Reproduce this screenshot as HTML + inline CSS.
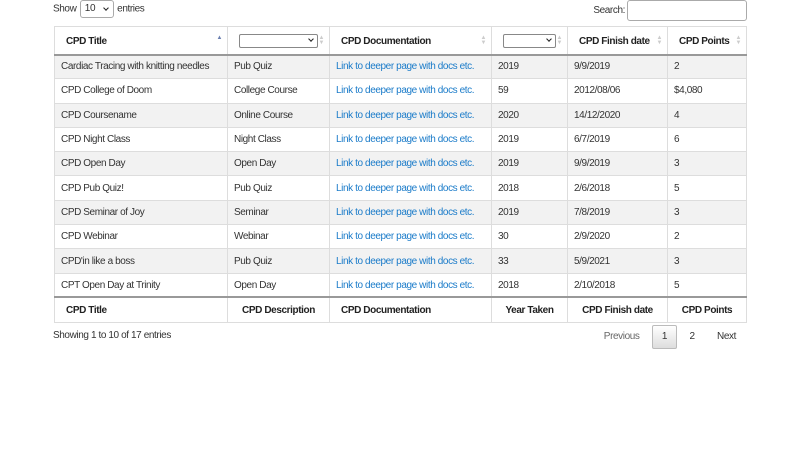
<!DOCTYPE html>
<html><head><style>
body{margin:0;width:800px;height:450px;background:#fff;font-family:"Liberation Sans",sans-serif;font-size:10px;letter-spacing:-0.4px;color:#333;position:relative}
.top{position:absolute;top:0;left:53px;right:53px;height:24px}
.show{position:absolute;left:0;top:0;line-height:17px}
.sel{display:inline-block;width:28px;height:16px;border:1px solid #aaa;border-radius:3px;vertical-align:middle;margin:0 1px;position:relative;line-height:16px;padding-left:4px;box-sizing:content-box}
.sel:after{content:"";position:absolute;right:5px;top:5px;width:3px;height:3px;border-right:1.5px solid #222;border-bottom:1.5px solid #222;transform:rotate(45deg)}
.search{position:absolute;right:0;top:0}
.search span{vertical-align:middle}
.search i{display:inline-block;width:118px;height:19px;border:1px solid #aaa;border-radius:3px;vertical-align:middle;margin-left:2px}
table{position:absolute;left:54px;top:26px;border-collapse:collapse;table-layout:fixed;width:692px}
td,th{border:1px solid #ddd;height:24.3px;padding:0 6px;text-align:left;white-space:nowrap;overflow:hidden;box-sizing:border-box}
th{font-weight:bold;color:#222;position:relative}
thead th{height:28px;border-bottom:2px solid #999;padding-left:11px;padding-top:2px}
tfoot th{height:25px;border-top:2px solid #999;text-align:center}
tfoot th.l{text-align:left;padding-left:11px}
tbody tr:nth-child(odd) td{background:#f2f2f2}
a{color:#1a7bc9;text-decoration:none}
.ar{position:absolute;right:5px;top:9px;font-size:6px;color:#ccc;line-height:5px}
.ar.on{color:#6a7fb0}
.fs{display:inline-block;height:12px;border:1px solid #888;border-radius:2px;position:relative;vertical-align:middle}
.fs:after{content:"";position:absolute;right:4px;top:2px;width:3px;height:3px;border-right:1.5px solid #222;border-bottom:1.5px solid #222;transform:rotate(45deg)}
.info{position:absolute;left:53px;top:330px}
.pg{position:absolute;top:325px;right:54px;height:24px}
.pg span{display:inline-block;padding:0 9px;line-height:22px;color:#666;border:1px solid transparent;vertical-align:top}
.pg .cur{border:1px solid #bbb;border-radius:2px;background:linear-gradient(#fff,#ddd);color:#333}
.pg .n{color:#333}
</style></head><body>
<div class="top">
<div class="show">Show <span class="sel">10</span> entries</div>
<div class="search"><span>Search:</span><i></i></div>
</div>
<table>
<colgroup><col style="width:173px"><col style="width:102px"><col style="width:162px"><col style="width:76px"><col style="width:100px"><col style="width:79px"></colgroup>
<thead><tr>
<th>CPD Title<span class="ar on">▲</span></th>
<th style="padding-left:11px"><span class="fs" style="width:77px"></span><span class="ar">▲<br>▼</span></th>
<th>CPD Documentation<span class="ar">▲<br>▼</span></th>
<th><span class="fs" style="width:51px"></span><span class="ar">▲<br>▼</span></th>
<th>CPD Finish date<span class="ar">▲<br>▼</span></th>
<th>CPD Points<span class="ar">▲<br>▼</span></th>
</tr></thead>
<tbody>
<tr><td>Cardiac Tracing with knitting needles</td><td>Pub Quiz</td><td><a>Link to deeper page with docs etc.</a></td><td>2019</td><td>9/9/2019</td><td>2</td></tr>
<tr><td>CPD College of Doom</td><td>College Course</td><td><a>Link to deeper page with docs etc.</a></td><td>59</td><td>2012/08/06</td><td>$4,080</td></tr>
<tr><td>CPD Coursename</td><td>Online Course</td><td><a>Link to deeper page with docs etc.</a></td><td>2020</td><td>14/12/2020</td><td>4</td></tr>
<tr><td>CPD Night Class</td><td>Night Class</td><td><a>Link to deeper page with docs etc.</a></td><td>2019</td><td>6/7/2019</td><td>6</td></tr>
<tr><td>CPD Open Day</td><td>Open Day</td><td><a>Link to deeper page with docs etc.</a></td><td>2019</td><td>9/9/2019</td><td>3</td></tr>
<tr><td>CPD Pub Quiz!</td><td>Pub Quiz</td><td><a>Link to deeper page with docs etc.</a></td><td>2018</td><td>2/6/2018</td><td>5</td></tr>
<tr><td>CPD Seminar of Joy</td><td>Seminar</td><td><a>Link to deeper page with docs etc.</a></td><td>2019</td><td>7/8/2019</td><td>3</td></tr>
<tr><td>CPD Webinar</td><td>Webinar</td><td><a>Link to deeper page with docs etc.</a></td><td>30</td><td>2/9/2020</td><td>2</td></tr>
<tr><td>CPD'in like a boss</td><td>Pub Quiz</td><td><a>Link to deeper page with docs etc.</a></td><td>33</td><td>5/9/2021</td><td>3</td></tr>
<tr><td>CPT Open Day at Trinity</td><td>Open Day</td><td><a>Link to deeper page with docs etc.</a></td><td>2018</td><td>2/10/2018</td><td>5</td></tr>
</tbody>
<tfoot><tr><th class="l">CPD Title</th><th>CPD Description</th><th class="l">CPD Documentation</th><th>Year Taken</th><th>CPD Finish date</th><th>CPD Points</th></tr></tfoot>
</table>
<div class="info">Showing 1 to 10 of 17 entries</div>
<div class="pg"><span>Previous</span> <span class="cur">1</span> <span class="n">2</span> <span class="n">Next</span></div>
</body></html>
